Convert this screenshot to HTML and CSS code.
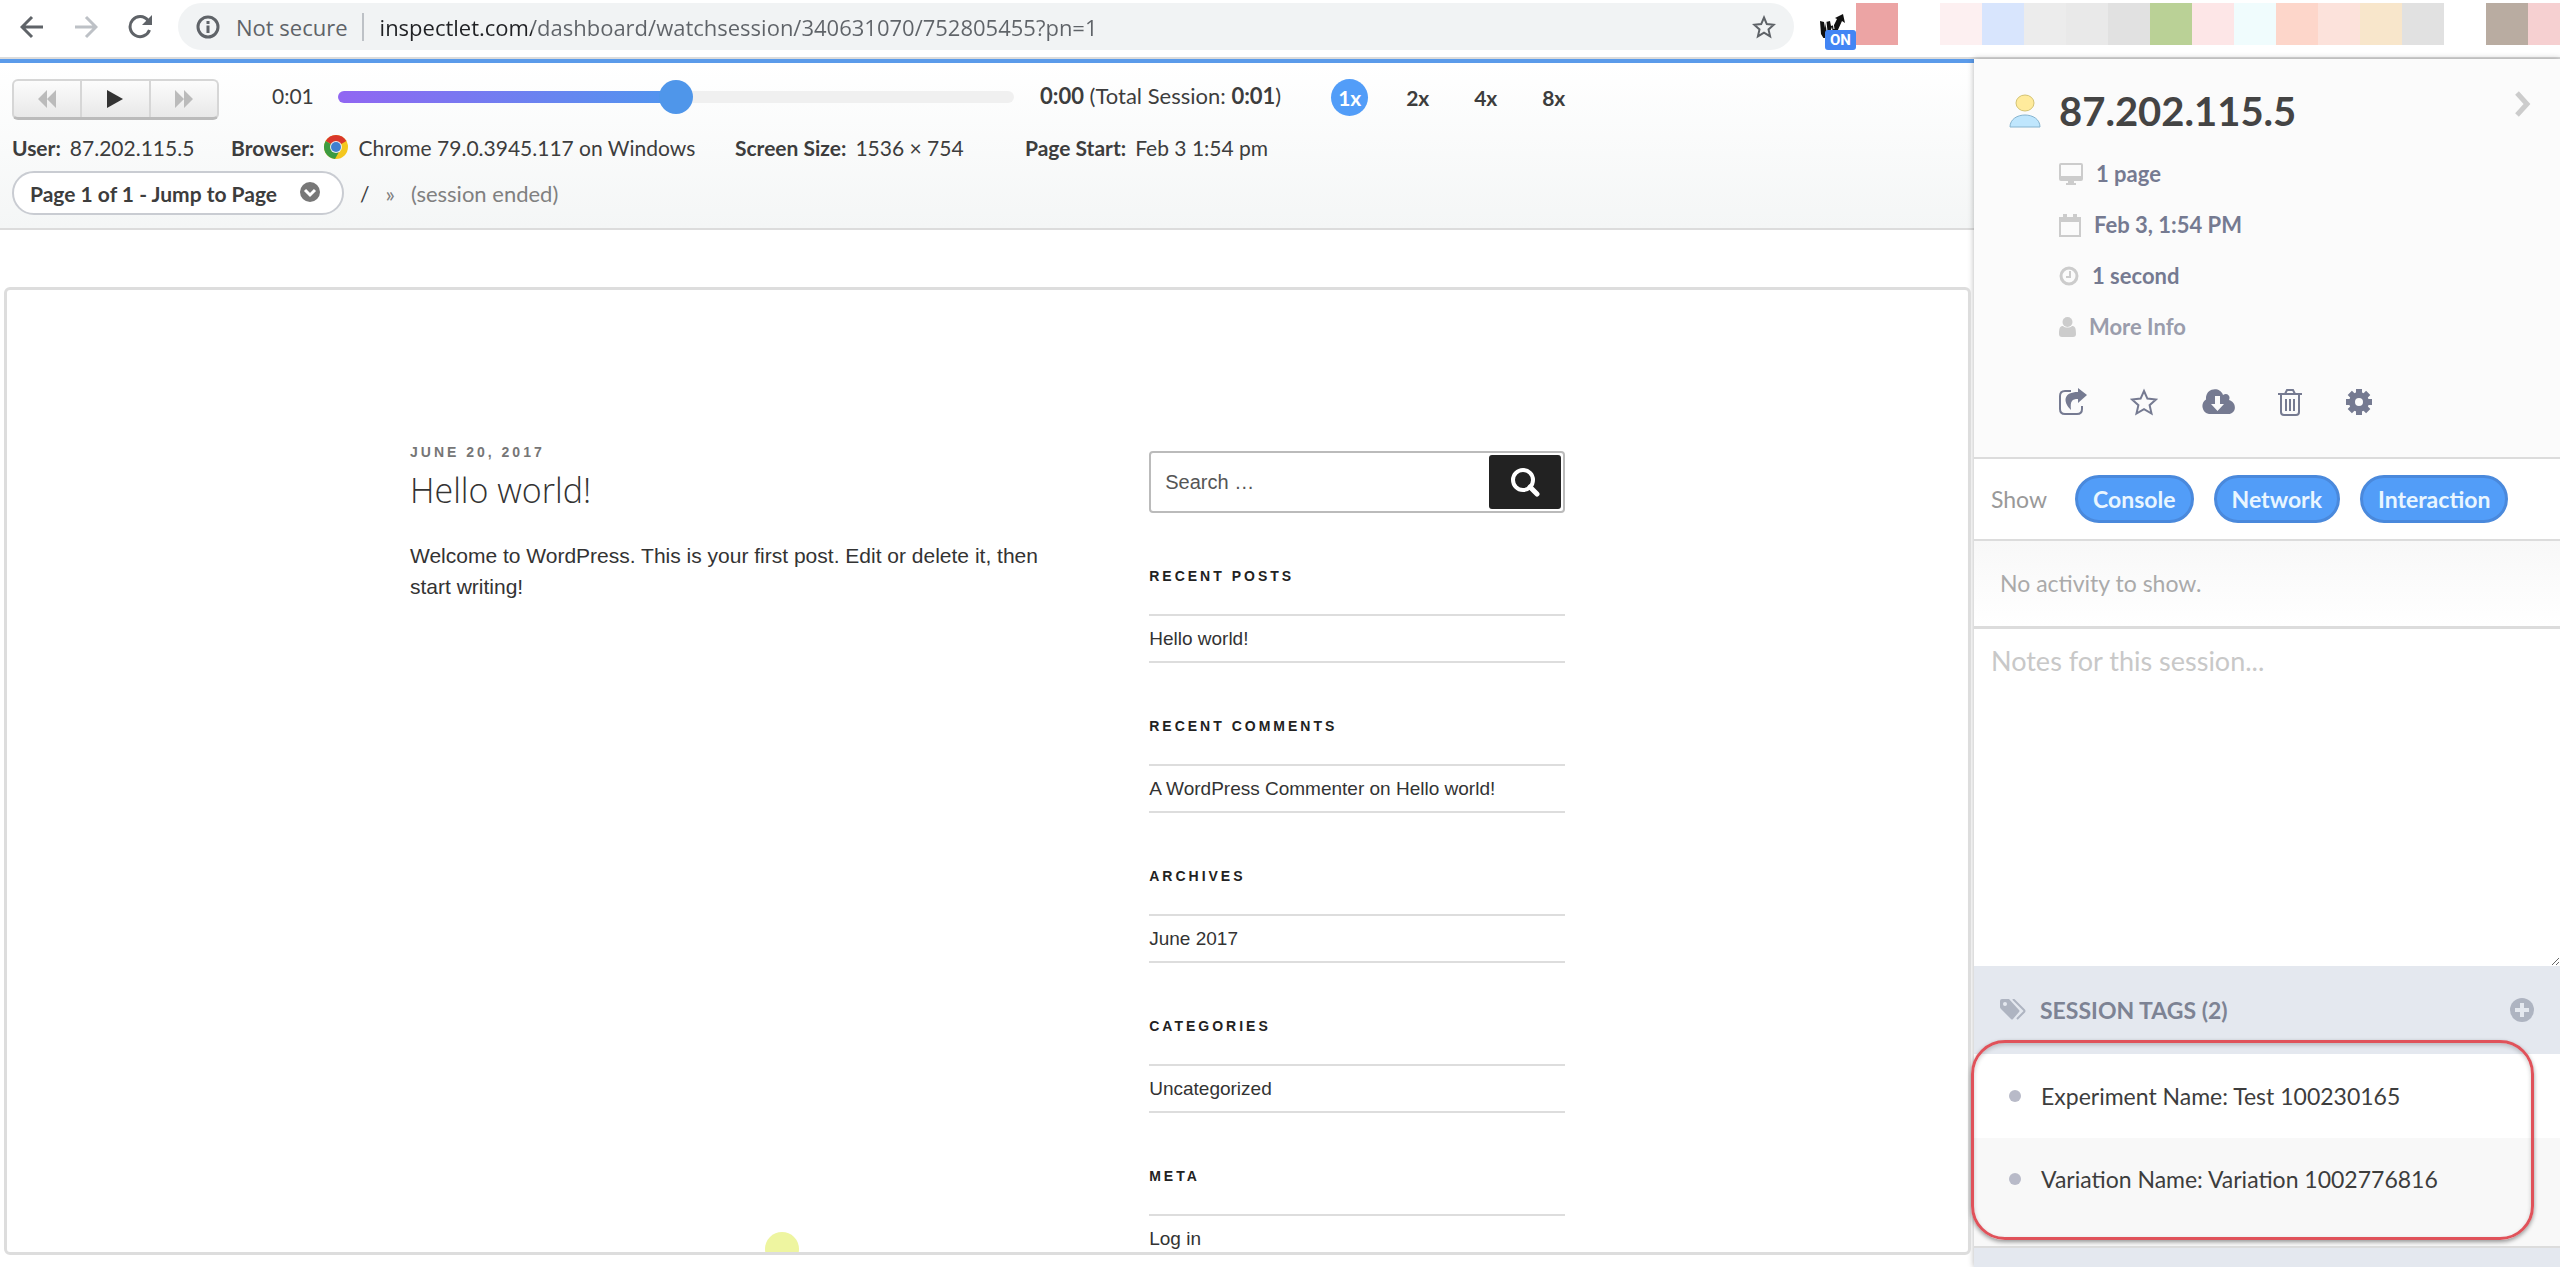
FILE: index.html
```html
<!DOCTYPE html>
<html lang="en">
<head>
  <meta charset="UTF-8" />
  <meta name="viewport" content="width=device-width, initial-scale=1.0" />
  <title>Watch Session</title>
  <link rel="stylesheet" href="styles.css">
</head>
<body>
  <!-- browser toolbar -->
  <div class="toolbar">
    <div class="nav-buttons">
      <button aria-label="Back"><svg width="24" height="24" viewBox="0 0 24 24"><path d="M23 12H3M12 2L2 12l10 10" fill="none" stroke="#5f6368" stroke-width="3"/></svg></button>
      <button aria-label="Forward"><svg width="24" height="24" viewBox="0 0 24 24"><path d="M1 12h20M12 2l10 10-10 10" fill="none" stroke="#bdc1c6" stroke-width="3"/></svg></button>
      <button aria-label="Reload"><svg width="24" height="24" viewBox="0 0 24 24"><path d="M20 5.500A10 10 0 1 0 21.500 15" fill="none" stroke="#5f6368" stroke-width="3"/><path d="M24 0v10H14z" fill="#5f6368"/></svg></button>
    </div>
    <div class="address">
      <svg width="24" height="24" viewBox="0 0 24 24"><circle cx="12" cy="12" r="10" fill="none" stroke="#5f6368" stroke-width="3"/><path d="M10.500 10.500h3V18h-3zM10.500 6h3v3h-3z" fill="#5f6368"/></svg>
      <label class="not-secure" for="url">Not secure</label>
      <input type="text" id="url" class="url" value="inspectlet.com/dashboard/watchsession/340631070/752805455?pn=1" />
      <button aria-label="Bookmark"><svg width="24" height="24" viewBox="0 0 24 24"><path d="M12 2.500l2.800 6.600 7 .6-5.300 4.700 1.600 7L12 17.600l-6.100 3.800 1.600-7L2.200 9.700l7-.6z" fill="none" stroke="#5f6368" stroke-width="2"/></svg></button>
    </div>
    <div class="extension">
      <svg width="26" height="24" viewBox="0 0 26 24"><path d="M0 7l4 1 1 6 1-6 4-1 1 5 3-1 3-6-2-1 8-4 2 9-3-2-5 11-4 2-1-7-4 10-4 2-3-5z" fill="#111"/><path d="M6 8l1 9M13 8l1 7" stroke="#fff" stroke-width="1"/></svg>
      <span class="badge">ON</span>
    </div>
    <div class="swatches">
      <i class="c-red"></i><i></i><i class="c-blush"></i><i class="c-blue"></i><i class="c-fog"></i><i class="c-mist"></i><i class="c-grey"></i><i class="c-green"></i><i class="c-pink"></i><i class="c-cyan"></i><i class="c-peach"></i><i class="c-rose"></i><i class="c-sand"></i><i class="c-grey"></i><i></i><i class="c-brown"></i><i class="c-salmon"></i>
    </div>
  </div>

  <div class="app">
    <main class="player">
      <header class="player-header">
        <div class="row controls">
          <div class="button-group">
            <button aria-label="Rewind"><svg width="20" height="18" viewBox="0 0 20 18"><path d="M10 0v18L1 9zM19 0v18l-9-9z" fill="#bbb"/></svg></button>
            <button aria-label="Play"><svg width="18" height="18" viewBox="0 0 18 18"><path d="M1 0l16 9-16 9z" fill="#333"/></svg></button>
            <button aria-label="Fast forward"><svg width="20" height="18" viewBox="0 0 20 18"><path d="M1 0v18l9-9zM10 0v18l9-9z" fill="#bbb"/></svg></button>
          </div>
          <label class="time" for="seek">0:01</label>
          <input type="range" id="seek" class="seek" min="0" max="100" value="50" />
          <div class="total"><b>0:00</b> (Total Session: <b>0:01</b>)</div>
          <div class="speeds">
            <button class="active">1x</button>
            <button>2x</button>
            <button>4x</button>
            <button>8x</button>
          </div>
        </div>
        <div class="row info">
          <div><b>User:</b> 87.202.115.5</div>
          <div><b>Browser:</b>
            <svg class="chrome" width="26" height="26" viewBox="0 0 26 26"><circle cx="13" cy="13" r="12" fill="#f4c71f"/><path d="M13 13L2.600 7A12 12 0 0 1 23.400 7z" fill="#d9372b"/><path d="M2.600 7A12 12 0 0 0 12 25l5-9-4-3z" fill="#3c9b41"/><circle cx="13" cy="13" r="6" fill="#eee"/><circle cx="13" cy="13" r="5" fill="#3f7fd0"/></svg>
            Chrome 79.0.3945.117 on Windows</div>
          <div><b>Screen Size:</b> 1536 × 754</div>
          <div><b>Page Start:</b> Feb 3 1:54 pm</div>
        </div>
        <div class="row jump">
          <div class="jump-select">
            <select aria-label="Jump to page">
              <option>Page 1 of 1 - Jump to Page</option>
            </select>
            <svg width="20" height="20" viewBox="0 0 20 20"><circle cx="10" cy="10" r="10" fill="#777"/><path d="M5 8l5 5 5-5" fill="none" stroke="#fff" stroke-width="3"/></svg>
          </div>
          <span class="path">/</span>
          <span class="muted">»</span>
          <span class="muted">(session ended)</span>
        </div>
      </header>

      <!-- recorded page -->
      <div class="frame">
        <div class="wp">
          <article class="post">
            <div class="post-date">June 20, 2017</div>
            <h1>Hello world!</h1>
            <p>Welcome to WordPress. This is your first post. Edit or delete it, then start writing!</p>
          </article>
          <aside class="widgets">
            <form class="search">
              <input type="search" placeholder="Search …" aria-label="Search" />
              <button type="button" aria-label="Search"><svg width="30" height="30" viewBox="0 0 30 30"><circle cx="13" cy="13" r="10" fill="none" stroke="#fff" stroke-width="4"/><path d="M20 20l7 7" stroke="#fff" stroke-width="5" stroke-linecap="round"/></svg></button>
            </form>
            <section>
              <h2>Recent Posts</h2>
              <ul><li><a href="#">Hello world!</a></li></ul>
            </section>
            <section>
              <h2>Recent Comments</h2>
              <ul><li><a href="#">A WordPress Commenter</a> on <a href="#">Hello world!</a></li></ul>
            </section>
            <section>
              <h2>Archives</h2>
              <ul><li><a href="#">June 2017</a></li></ul>
            </section>
            <section>
              <h2>Categories</h2>
              <ul><li><a href="#">Uncategorized</a></li></ul>
            </section>
            <section>
              <h2>Meta</h2>
              <ul><li><a href="#">Log in</a></li></ul>
            </section>
          </aside>
        </div>
        <span class="cursor"></span>
      </div>
    </main>

    <aside class="sidebar">
      <section class="visitor">
        <div class="visitor-head">
          <svg width="32" height="34" viewBox="0 0 32 34"><ellipse cx="16" cy="9" rx="9" ry="8" fill="#ffeb9c" stroke="#d3c374" stroke-width="1"/><path d="M1 33c0-16 30-16 30 0z" fill="#bfe6fd" stroke="#86b4cf" stroke-width="1"/></svg>
          <h1>87.202.115.5</h1>
          <button aria-label="Next"><svg width="18" height="26" viewBox="0 0 18 26"><path d="M3 2l10 11L3 24" fill="none" stroke="#ccc" stroke-width="5"/></svg></button>
        </div>
        <ul class="facts">
          <li><svg width="24" height="22" viewBox="0 0 24 22"><path d="M2 0h20a2 2 0 0 1 2 2v14a2 2 0 0 1-2 2h-7v2h2v2H7v-2h2v-2H2a2 2 0 0 1-2-2V2a2 2 0 0 1 2-2zm0 2v11h20V2z" fill="#ccc" fill-rule="evenodd"/></svg>1 page</li>
          <li><svg width="22" height="24" viewBox="0 0 22 24"><path d="M1 5h20v18H1z" fill="none" stroke="#ccc" stroke-width="2"/><path d="M1 4h20v5H1zM4 1h4v6H4zM14 1h4v6h-4z" fill="#ccc"/></svg>Feb 3, 1:54 PM</li>
          <li><svg width="20" height="20" viewBox="0 0 20 20"><circle cx="10" cy="10" r="8" fill="none" stroke="#ccc" stroke-width="3"/><path d="M11 5v6H7" fill="none" stroke="#ccc" stroke-width="2"/></svg>1 second</li>
          <li><svg width="17" height="20" viewBox="0 0 17 20"><circle cx="8.500" cy="5" r="5" fill="#ccc"/><path d="M0 17c0-6 1-8 4-8 2 2 7 2 9 0 3 0 4 2 4 8 0 2-1 3-3 3H3c-2 0-3-1-3-3z" fill="#ccc"/></svg><a href="#">More Info</a></li>
        </ul>
        <div class="actions">
          <button aria-label="Share"><svg width="28" height="28" viewBox="0 0 28 28"><path d="M12 3H6C3 3 1 5 1 8v13c0 3 2 5 5 5h12c3 0 5-2 5-5v-3" fill="none" stroke="#757a91" stroke-width="2"/><path d="M19 0l9 7-9 8v-4c-6 0-8 2-7 11C3 13 5 4 19 4z" fill="#757a91"/></svg></button>
          <button aria-label="Star"><svg width="28" height="28" viewBox="0 0 28 28"><path d="M14 3l3.400 7.600 8.600.9-6.400 5.700 1.900 8.300-7.500-4.300-7.500 4.300 1.900-8.300L2 11.500l8.600-.9z" fill="none" stroke="#757a91" stroke-width="2"/></svg></button>
          <button aria-label="Download"><svg width="34" height="28" viewBox="0 0 34 28"><path d="M8 26a8 8 0 0 1-3-14.500C4 0 19-2 22 7c4-3 8 1 6 5 8 2 8 14-1 14z" fill="#757a91"/><path d="M14 8h5v8h4l-6.500 7L10 16h4z" fill="#fafafa"/></svg></button>
          <button aria-label="Delete"><svg width="24" height="28" viewBox="0 0 24 28"><path d="M0 6h24M7 6l2-4h6l2 4M3 6v18q0 3 3 3h12q3 0 3-3V6M8 11v12M12 11v12M16 11v12" fill="none" stroke="#757a91" stroke-width="2"/></svg></button>
          <button aria-label="Settings"><svg width="28" height="28" viewBox="0 0 28 28"><circle cx="14" cy="14" r="7" fill="none" stroke="#757a91" stroke-width="6"/><path d="M14 1v5M14 22v5M1 14h5M22 14h5M4.800 4.800l3.500 3.500M19.700 19.700l3.500 3.500M4.800 23.200l3.500-3.500M19.700 8.300l3.500-3.500" stroke="#757a91" stroke-width="6"/></svg></button>
        </div>
      </section>

      <section class="filters">
        <span>Show</span>
        <button>Console</button>
        <button>Network</button>
        <button>Interaction</button>
      </section>

      <section class="activity">No activity to show.</section>

      <textarea class="notes" placeholder="Notes for this session..." aria-label="Notes for this session"></textarea>

      <section class="tags">
        <div class="tags-head">
          <svg width="26" height="22" viewBox="0 0 26 22"><path d="M0 2q0-2 2-2h7l10 11q1 1 0 2l-6 7q-1 1-2 0L1 10q-1-1-1-2z" fill="#aeb4c1"/><circle cx="5" cy="5" r="2" fill="#e4e8ef"/><path d="M13 0l11 11q1 1 0 2l-7 7" fill="none" stroke="#aeb4c1" stroke-width="2"/></svg>
          <h2>SESSION TAGS (2)</h2>
          <button aria-label="Add tag"><svg width="24" height="24" viewBox="0 0 24 24"><circle cx="12" cy="12" r="12" fill="#aeb4c1"/><path d="M12 5v14M5 12h14" stroke="#e4e8ef" stroke-width="4"/></svg></button>
        </div>
        <ul>
          <li>Experiment Name: Test 100230165</li>
          <li>Variation Name: Variation 1002776816</li>
        </ul>
        <div class="highlight"></div>
      </section>
    </aside>
  </div>
</body>
</html>
```
FILE: styles.css
```css
* {
  box-sizing: border-box;
}
body {
  margin: 0;
  height: 100vh;
  display: flex;
  flex-direction: column;
  overflow: hidden;
  background: #fff;
  color: #3d3d3d;
  font-family: Lato, sans-serif;
  font-size: 21px;
}
button {
  border: none;
  background: none;
  padding: 0;
  font-family: inherit;
  cursor: pointer;
}
svg {
  display: block;
  flex: none;
}
ul {
  list-style: none;
  margin: 0;
  padding: 0;
}
h1, h2, p {
  margin: 0;
}

/* browser toolbar */
.toolbar {
  flex: none;
  display: flex;
  height: 59px;
  padding-top: 3px;
  border-bottom: 2px solid #dcdcdc;
}
.nav-buttons {
  display: flex;
  align-items: center;
  gap: 30px;
  height: 47px;
  padding: 0 26px 0 20px;
}
.address {
  flex: 1;
  display: flex;
  align-items: center;
  height: 47px;
  padding: 0 18px;
  border-radius: 24px;
  background: #f1f3f4;
  font-family: "Open Sans", sans-serif;
  font-size: 22px;
}
.not-secure {
  margin-left: 16px;
  padding-right: 14px;
  border-right: 2px solid #bdc1c6;
  line-height: 28px;
  color: #5f6368;
}
.url {
  flex: 1;
  min-width: 0;
  margin-left: 16px;
  padding: 0;
  border: none;
  outline: none;
  font: inherit;
  /* host is darker than the rest of the address */
  color: transparent;
  background: linear-gradient(90deg, #202124 152px, #5f6368 152px);
  background-clip: text;
  -webkit-background-clip: text;
}
.extension {
  position: relative;
  width: 62px;
  padding: 11px 0 0 26px;
}
.badge {
  position: absolute;
  left: 31px;
  top: 27px;
  width: 31px;
  border-radius: 3px;
  background: #4285f4;
  color: #fff;
  font: bold 15px/20px Roboto, sans-serif;
  text-align: center;
}
.swatches {
  display: flex;
  width: 704px;
  height: 42px;
  overflow: hidden;
}
.swatches i {
  flex: 0 0 42px;
}
.c-red { background: #eca4a4; }
.c-blush { background: #fdf0f1; }
.c-blue { background: #d8e5fd; }
.c-fog { background: #ececec; }
.c-mist { background: #e9e9e9; }
.c-grey { background: #e1e1e1; }
.c-green { background: #bad196; }
.c-pink { background: #fde6e7; }
.c-cyan { background: #f0fcfd; }
.c-peach { background: #fdd6ca; }
.c-rose { background: #fce2db; }
.c-sand { background: #f8e6cb; }
.c-brown { background: #b9aca1; }
.c-salmon { background: #f6d0d1; }

.app {
  flex: 1;
  min-height: 0;
  display: flex;
}

/* player */
.player {
  flex: 1;
  min-width: 0;
  display: flex;
  flex-direction: column;
  border-top: 4px solid #5b9bea;
}
.player-header {
  flex: none;
  height: 167px;
  padding: 16px 12px 0;
  border-bottom: 2px solid #dcdcdc;
  background: linear-gradient(#fff, #f4f6f6);
}
.row {
  display: flex;
  align-items: center;
  white-space: nowrap;
}
.controls {
  align-items: flex-start;
  height: 42px;
  line-height: 34px;
}
.button-group {
  display: flex;
  width: 207px;
  height: 41px;
  border: 2px solid #d6d6d6;
  border-bottom: 3px solid #bbb;
  border-radius: 6px;
  background: linear-gradient(#fcfcfc, #e8e8e8);
}
.button-group button {
  flex: 1;
  display: flex;
  align-items: center;
  justify-content: center;
}
.button-group button + button {
  border-left: 2px solid #d6d6d6;
}
.time {
  width: 66px;
  margin-left: 53px;
}
.seek {
  flex: 0 1 676px;
  height: 36px;
  margin: 0 26px 0 0;
  appearance: none;
  background: none;
}
.seek::-webkit-slider-runnable-track {
  height: 12px;
  border-radius: 6px;
  background: linear-gradient(90deg, #9166f2, #5096ef 50%, #f0f0f0 50%);
}
.seek::-webkit-slider-thumb {
  appearance: none;
  width: 34px;
  height: 34px;
  margin-top: -11px;
  border-radius: 50%;
  background: #4f96ea;
}
.total {
  font-size: 22px;
}
.speeds {
  display: flex;
  gap: 31px;
  margin-left: 50px;
}
.speeds button {
  width: 37px;
  height: 37px;
  border-radius: 50%;
  color: #3d3d3d;
  font-size: 21px;
  font-weight: bold;
}
.speeds .active {
  background: #529df8;
  color: #fff;
}
.info {
  display: grid;
  grid-template-columns: 219px 504px 290px auto;
  height: 28px;
  margin-top: 12px;
}
.info div {
  display: flex;
  align-items: center;
  gap: 9px;
}
.jump {
  height: 44px;
  margin-top: 10px;
  gap: 16px;
}
.jump-select {
  position: relative;
}
.jump-select select {
  width: 332px;
  height: 44px;
  padding: 0 16px;
  appearance: none;
  border: 2px solid #c9ccd2;
  border-radius: 22px;
  background: #fff;
  color: #3d3d3d;
  font: bold 21px Lato, sans-serif;
}
.jump-select svg {
  position: absolute;
  right: 24px;
  top: 11px;
  pointer-events: none;
}
.muted {
  color: #808080;
  font-size: 22px;
}

/* recorded page */
.frame {
  position: relative;
  flex: 1;
  min-height: 0;
  margin: 57px 3px 12px 4px;
  border: 3px solid #ddd;
  border-radius: 6px;
  overflow: hidden;
  font-family: "Liberation Sans", Arial, sans-serif;
}
.wp {
  display: flex;
  justify-content: space-between;
  max-width: 1155px;
  margin: 0 auto;
  color: #333;
}
.post {
  width: 58%;
  padding-top: 153px;
}
.post-date {
  color: #767676;
  font-size: 14px;
  font-weight: bold;
  line-height: 18px;
  letter-spacing: 3px;
  text-transform: uppercase;
}
.post h1 {
  margin: 8px 0 29px;
  font-family: "Open Sans", sans-serif;
  font-size: 34px;
  font-weight: 300;
  line-height: 42px;
}
.post p {
  line-height: 31px;
}
.widgets {
  width: 36%;
  padding-top: 161px;
}
.search {
  display: flex;
  height: 62px;
  margin-bottom: 53px;
  padding: 2px;
  border: 2px solid #bbb;
  border-radius: 4px;
}
.search input {
  flex: 1;
  min-width: 0;
  padding: 0 12px;
  border: none;
  font: 20px "Liberation Sans", Arial, sans-serif;
}
.search input::placeholder {
  color: #555;
}
.search button {
  display: flex;
  align-items: center;
  justify-content: center;
  width: 72px;
  border-radius: 3px;
  background: #222;
}
.widgets h2 {
  margin-bottom: 28px;
  color: #222;
  font-size: 14px;
  line-height: 20px;
  letter-spacing: 3px;
  text-transform: uppercase;
}
.widgets section {
  margin-bottom: 53px;
}
.widgets li {
  height: 49px;
  border: solid #ddd;
  border-width: 2px 0;
  font-size: 19px;
  line-height: 46px;
}
.widgets a {
  color: #333;
  text-decoration: none;
}
.cursor {
  position: absolute;
  left: 758px;
  bottom: -14px;
  width: 34px;
  height: 34px;
  border-radius: 50%;
  background: #eef5a0;
}

/* sidebar */
.sidebar {
  flex: 0 0 586px;
  display: flex;
  flex-direction: column;
  background: #e4e8ef;
  box-shadow: 0 0 6px rgba(0, 0, 0, 0.3);
}
.visitor {
  height: 400px;
  padding: 28px 28px 0 35px;
  border-bottom: 2px solid #dcdcdc;
  background: #fbfbfb;
}
.visitor-head {
  display: flex;
  align-items: center;
  gap: 18px;
  height: 48px;
}
.visitor-head h1 {
  flex: 1;
  color: #444;
  font-size: 40px;
}
.visitor-head button {
  align-self: flex-start;
  padding-top: 4px;
}
.facts {
  padding: 13px 0 0 50px;
}
.facts li {
  display: flex;
  align-items: center;
  gap: 13px;
  height: 51px;
  color: #757a91;
  font-size: 22px;
  font-weight: bold;
}
.facts a {
  color: #9a9dac;
  text-decoration: none;
}
.actions {
  display: flex;
  gap: 43px;
  padding: 36px 0 0 50px;
}
.filters {
  display: flex;
  align-items: center;
  height: 82px;
  padding-left: 17px;
  border-bottom: 2px solid #dcdcdc;
  background: #fff;
}
.filters span {
  margin-right: 8px;
  color: #999;
  font-size: 23px;
}
.filters button {
  height: 48px;
  margin-left: 20px;
  padding: 0 15px;
  border: 3px solid #4a89dc;
  border-radius: 24px;
  background: #529df8;
  color: #e9f6ff;
  font-size: 23px;
  font-weight: bold;
}
.activity {
  height: 88px;
  padding-left: 26px;
  border-bottom: 3px solid #dcdcdc;
  background: linear-gradient(#f8f8f8, #fff);
  color: #aaa;
  font-size: 23px;
  line-height: 84px;
}
.notes {
  display: block;
  width: 100%;
  height: 337px;
  padding: 16px 17px;
  border: none;
  background: #fff;
  color: #3d3d3d;
  font: 27px/32px Lato, sans-serif;
}
.notes::placeholder {
  color: #c8c8c8;
}
.tags {
  position: relative;
}
.tags-head {
  display: flex;
  align-items: center;
  gap: 14px;
  height: 88px;
  padding: 0 26px;
}
.tags-head h2 {
  flex: 1;
  color: #7d8394;
  font-size: 23px;
}
.tags li {
  display: flex;
  align-items: center;
  gap: 20px;
  height: 84px;
  padding-left: 35px;
  background: #fff;
  font-size: 23px;
}
.tags li::before {
  content: "";
  width: 12px;
  height: 12px;
  border-radius: 50%;
  background: #b8bac8;
}
.tags li:last-child {
  height: 110px;
  padding-bottom: 26px;
  border-bottom: 2px solid #dcdcdc;
  background: #f8f8f8;
}
.highlight {
  position: absolute;
  top: 74px;
  left: -3px;
  right: 26px;
  height: 200px;
  border: 3px solid #e0525a;
  border-radius: 34px;
  box-shadow: 0 2px 4px rgba(0, 0, 0, 0.4), inset 0 2px 4px rgba(0, 0, 0, 0.2);
  pointer-events: none;
}
```
